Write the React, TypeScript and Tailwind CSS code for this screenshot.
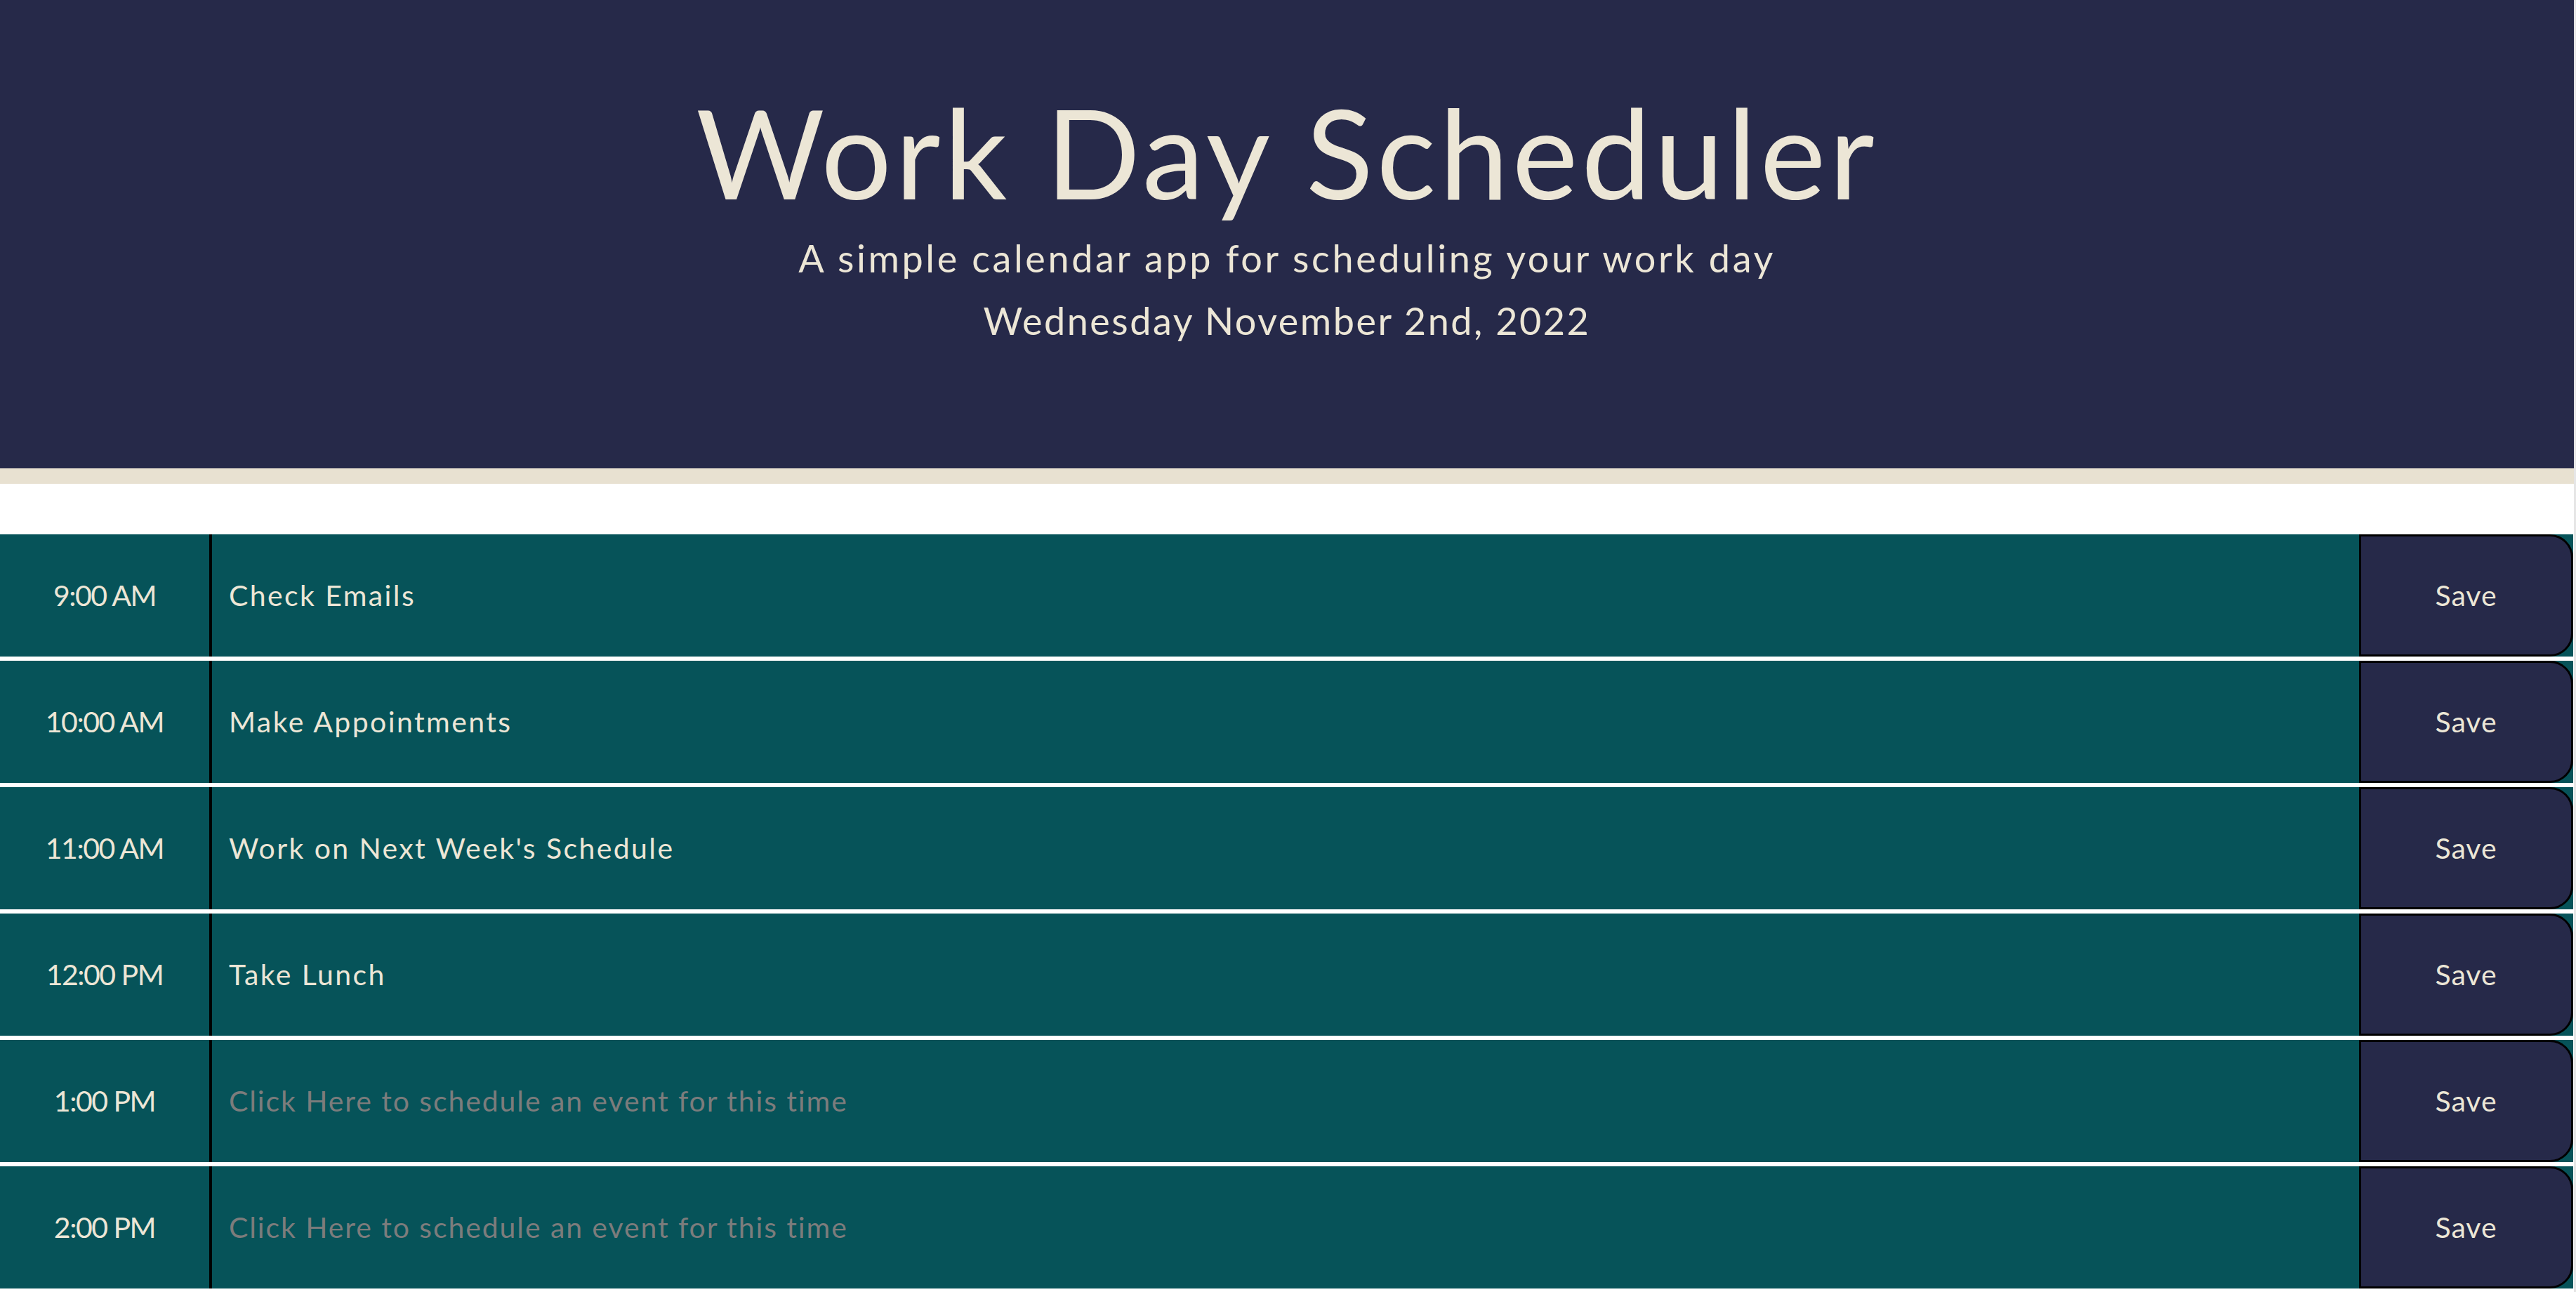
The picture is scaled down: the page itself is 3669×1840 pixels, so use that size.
import { useState } from 'react';

type Slot = { hour: string; text: string };

const initialSlots: Slot[] = [
  { hour: '9:00 AM', text: 'Check Emails' },
  { hour: '10:00 AM', text: 'Make Appointments' },
  { hour: '11:00 AM', text: "Work on Next Week's Schedule" },
  { hour: '12:00 PM', text: 'Take Lunch' },
  { hour: '1:00 PM', text: '' },
  { hour: '2:00 PM', text: '' },
];

export default function App() {
  const [slots] = useState<Slot[]>(initialSlots);

  return (
    <div className="min-h-screen bg-white border-r-[3px] border-[#e6e6e6] font-['Lato','Noto_Sans',sans-serif] text-[#ece6d6]">
      {/* Header */}
      <header className="h-[689px] bg-[#262949] border-b-[22px] border-[#e8e1d1] pt-[127px] text-center">
        <h1 className="text-[177px] leading-none font-normal tracking-[5px]">Work Day Scheduler</h1>
        <p className="mt-[19px] text-[54px] leading-[89px] tracking-[3.6px]">A simple calendar app for scheduling your work day</p>
        <p className="text-[54px] leading-[89px] tracking-[2.5px]">Wednesday November 2nd, 2022</p>
      </header>

      {/* Time blocks */}
      <main className="mt-[72px] pr-[1px] flex flex-col gap-[6px]">
        {slots.map((slot) => (
          <div key={slot.hour} className="flex h-[174px] bg-[#065359]">
            <div className="w-[302px] shrink-0 border-r-4 border-black flex items-center justify-center text-[41px] tracking-[-1.5px]">
              {slot.hour}
            </div>
            <div className="flex-1 flex items-center pl-6 text-[41px]">
              {slot.text ? (
                <span className="tracking-[2.4px]">{slot.text}</span>
              ) : (
                <span className="text-[#7c7c7c] tracking-[1.9px]">Click Here to schedule an event for this time</span>
              )}
            </div>
            <button className="w-[305px] shrink-0 bg-[#262949] border-[3px] border-black rounded-r-[33px] text-[41px] tracking-[1px] text-[#ece6d6]">
              Save
            </button>
          </div>
        ))}
      </main>
    </div>
  );
}
